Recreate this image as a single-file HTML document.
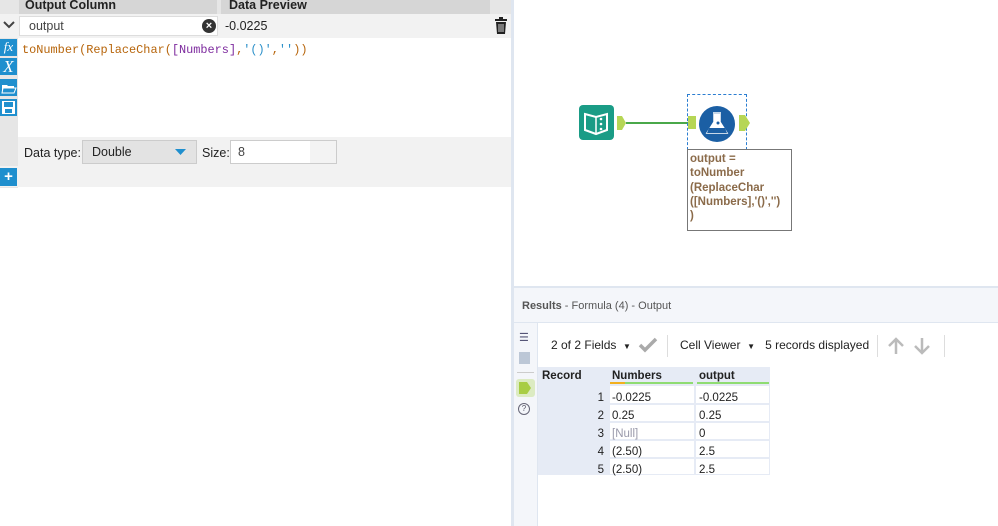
<!DOCTYPE html>
<html><head><style>
*{margin:0;padding:0;box-sizing:border-box}
body{width:998px;height:526px;overflow:hidden;background:#fff;font-family:"Liberation Sans",sans-serif;font-size:12px;color:#222;position:relative}
.a{position:absolute}
.mono{font-family:"Liberation Mono",monospace}
</style></head><body>
<div class="a" style="left:0;top:0;width:511px;height:14px;background:#e6e6e6"></div>
<div class="a" style="left:19px;top:0;width:198px;height:14px;background:#d6d6d6;font-weight:bold;font-size:12.5px;padding-left:6px;line-height:10px;color:#222">Output Column</div>
<div class="a" style="left:221px;top:0;width:269px;height:14px;background:#d6d6d6;font-weight:bold;font-size:12.5px;padding-left:8px;line-height:10px;color:#222">Data Preview</div>
<div class="a" style="left:0;top:14px;width:511px;height:24px;background:#f2f2f2"></div>
<svg class="a" style="left:2px;top:20px" width="14" height="10"><path d="M2 2l5 5 5-5" stroke="#444" stroke-width="2" fill="none"/></svg>
<div class="a" style="left:19px;top:16px;width:199px;height:20px;background:#fff;border:1px solid #ddd;padding-left:9px;line-height:18px;font-size:12.5px;color:#444">output</div>
<div class="a" style="left:202px;top:19px;width:14px;height:14px;border-radius:7px;background:#333;color:#fff;font-size:11px;line-height:14px;text-align:center;font-weight:bold">×</div>
<div class="a" style="left:225px;top:19px;font-size:12.5px;color:#222">-0.0225</div>
<svg class="a" style="left:494px;top:17px" width="14" height="18"><rect x="1" y="2" width="12" height="2" fill="#222"/><rect x="5" y="0" width="4" height="2" fill="#222"/><path d="M2 5h10l-1 12H3z" fill="#222"/><path d="M5 7v8M7 7v8M9 7v8" stroke="#fff" stroke-width="0.8"/></svg>
<div class="a" style="left:0;top:38px;width:18px;height:150px;background:#e6e6e6"></div>
<div class="a" style="left:0;top:39px;width:17px;height:17px;background:#1f8fce;color:#fff;font-family:'Liberation Serif',serif;font-style:italic;font-size:13px;text-align:center;line-height:15px">fx</div>
<div class="a" style="left:0;top:58px;width:17px;height:17px;background:#1f8fce;color:#fff;font-family:'Liberation Serif',serif;font-style:italic;font-size:17px;text-align:center;line-height:17px">X</div>
<div class="a" style="left:0;top:79px;width:17px;height:17px;background:#1f8fce"><svg width="17" height="17"><path d="M2 6h5l1 1h6v7H2z" fill="#fff"/><path d="M3 9h13l-2 5H2z" fill="#1f8fce" stroke="#fff"/></svg></div>
<div class="a" style="left:0;top:99px;width:17px;height:17px;background:#1f8fce"><svg width="17" height="17"><rect x="2" y="2" width="13" height="13" fill="#fff"/><rect x="4" y="3" width="9" height="5" fill="#1f8fce"/><rect x="5" y="10" width="7" height="4" fill="#1f8fce"/></svg></div>
<div class="a mono" style="left:22px;top:43px;font-size:11.9px;color:#b7650b;white-space:pre">toNumber(ReplaceChar(<span style="color:#7d2a9e">[Numbers]</span>,<span style="color:#2a8fc9">'()'</span>,<span style="color:#2a8fc9">''</span>))</div>
<div class="a" style="left:18px;top:137px;width:493px;height:29px;background:#f2f2f2"></div>
<div class="a" style="left:24px;top:146px;font-size:12.5px">Data type:</div>
<div class="a" style="left:82px;top:140px;width:115px;height:24px;background:#e3e3e3;border:1px solid #ccc;padding-left:9px;line-height:22px;font-size:12.5px">Double</div>
<svg class="a" style="left:175px;top:149px" width="12" height="7"><path d="M0 0h11l-5.5 6z" fill="#1f8fce"/></svg>
<div class="a" style="left:202px;top:146px;font-size:12.5px">Size:</div>
<div class="a" style="left:230px;top:140px;width:107px;height:24px;background:#fff;border:1px solid #ccc;padding-left:7px;line-height:22px;font-size:12.5px;color:#444">8</div>
<div class="a" style="left:310px;top:141px;width:26px;height:22px;background:#f3f3f3"></div>
<div class="a" style="left:0;top:166px;width:511px;height:21px;background:#f2f2f2"></div>
<div class="a" style="left:0;top:168px;width:17px;height:18px;background:#1f8fce;color:#fff;font-weight:bold;font-size:15px;text-align:center;line-height:18px">+</div>
<div class="a" style="left:511px;top:0;width:3px;height:526px;background:#dfe6f0"></div>
<div class="a" style="left:514px;top:286px;width:484px;height:2px;background:#dfe6f0"></div>
<div class="a" style="left:579px;top:105px;width:35px;height:35px;border-radius:4px;background:#1a9c86"><svg width="35" height="35"><path d="M6 9l11 3 11-3v16l-11 4-11-4z" fill="none" stroke="#fff" stroke-width="2"/><path d="M17 12v17" stroke="#fff" stroke-width="1.5"/><circle cx="22" cy="14" r="1.3" fill="#fff"/><circle cx="22" cy="19" r="1.3" fill="#fff"/><circle cx="22" cy="24" r="1.3" fill="#fff"/></svg></div>
<svg class="a" style="left:617px;top:116px" width="10" height="14"><path d="M0 0h5l4 7-4 7H0z" fill="#b6d655"/></svg>
<div class="a" style="left:626px;top:122px;width:63px;height:2px;background:#4aa84a"></div>
<div class="a" style="left:687px;top:94px;width:60px;height:56px;border:1px dashed #2a7dd1"></div>
<div class="a" style="left:688px;top:116px;width:8px;height:13px;background:#b6d655"></div>
<svg class="a" style="left:697px;top:104px" width="40" height="40"><circle cx="20" cy="20" r="18" fill="#1b5fa4"/><path d="M16 9h8M17 10v8l-7 11h20l-7-11v-8" fill="#fff" stroke="#fff" stroke-width="1.5"/><path d="M12 24h16l2 5H10z" fill="#1b5fa4"/><circle cx="21" cy="19" r="1.5" fill="#1b5fa4"/></svg>
<svg class="a" style="left:739px;top:115px" width="12" height="16"><path d="M0 0h6l5 8-5 8H0z" fill="#b6d655"/></svg>
<div class="a" style="left:687px;top:149px;width:105px;height:82px;border:1px solid #777;background:#fff;padding:2px 0 0 2px;font-size:11.5px;font-weight:bold;color:#8b6b4a;line-height:14.3px">output =<br>toNumber<br>(ReplaceChar<br>([Numbers],'()','')<br>)</div>
<div class="a" style="left:514px;top:288px;width:484px;height:35px;background:#f4f6fa;border-bottom:1px solid #dfe6f0"></div>
<div class="a" style="left:522px;top:300px;font-size:11px;color:#555"><b>Results</b> - Formula (4) - Output</div>
<div class="a" style="left:514px;top:323px;width:24px;height:203px;background:#f4f6fa;border-right:1px solid #dfe6f0"></div>
<div class="a" style="left:519px;top:331px;font-size:11px;color:#557">☰</div>
<div class="a" style="left:519px;top:352px;width:11px;height:12px;background:#bcc7d6"></div>
<div class="a" style="left:517px;top:372px;width:17px;height:1px;background:#ccc"></div>
<div class="a" style="left:516px;top:379px;width:19px;height:18px;background:#dcebc2;border-radius:3px"></div>
<svg class="a" style="left:519px;top:382px" width="13" height="12"><path d="M0 0h8l4 6-4 6H0z" fill="#a8cd44"/></svg>
<div class="a" style="left:518px;top:403px;width:12px;height:12px;border:1px solid #667;border-radius:6px;font-size:8px;line-height:10px;text-align:center;color:#556">?</div>
<div class="a" style="left:551px;top:338px;font-size:12px">2 of 2 Fields &nbsp;<span style="font-size:8px">▼</span></div>
<svg class="a" style="left:638px;top:337px" width="20" height="16"><path d="M2 8l5 5 11-11" stroke="#aaa" stroke-width="3.5" fill="none"/></svg>
<div class="a" style="left:667px;top:335px;width:1px;height:22px;background:#ddd"></div>
<div class="a" style="left:680px;top:338px;font-size:12px">Cell Viewer &nbsp;<span style="font-size:8px">▼</span> &nbsp;&nbsp;5 records displayed</div>
<div class="a" style="left:877px;top:335px;width:1px;height:22px;background:#ddd"></div>
<svg class="a" style="left:886px;top:336px" width="46" height="20"><path d="M10 18V3M3 10l7-7 7 7M36 2v15M29 10l7 7 7-7" stroke="#bbb" stroke-width="2.5" fill="none"/></svg>
<div class="a" style="left:944px;top:335px;width:1px;height:22px;background:#ddd"></div>
<div class="a" style="left:538px;top:367px;width:232px;height:108px;background:#e6ebf5"></div>
<div class="a" style="left:542px;top:370px;font-weight:bold;font-size:11.5px">Record</div>
<div class="a" style="left:612px;top:370px;font-weight:bold;font-size:11.5px">Numbers</div>
<div class="a" style="left:699px;top:370px;font-weight:bold;font-size:11.5px">output</div>
<div class="a" style="left:610px;top:382px;width:15px;height:2px;background:#f2b01e"></div>
<div class="a" style="left:625px;top:382px;width:68px;height:2px;background:#8fdc72"></div>
<div class="a" style="left:697px;top:382px;width:72px;height:2px;background:#8fdc72"></div>
<div class="a" style="left:609px;top:386px;width:160px;height:88px;background:#fff"></div>
<div class="a" style="left:608px;top:367px;width:2px;height:108px;background:#e6ebf5"></div>
<div class="a" style="left:694px;top:367px;width:2px;height:108px;background:#e6ebf5"></div>
<div class="a" style="left:538px;top:403px;width:232px;height:2px;background:#e6ebf5"></div>
<div class="a" style="left:538px;top:421px;width:232px;height:2px;background:#e6ebf5"></div>
<div class="a" style="left:538px;top:439px;width:232px;height:2px;background:#e6ebf5"></div>
<div class="a" style="left:538px;top:457px;width:232px;height:2px;background:#e6ebf5"></div>
<div class="a" style="left:538px;top:389px;width:232px;font-size:11.5px;line-height:18px">
<div style="position:relative;height:18px"><span class="a" style="right:166px">1</span><span class="a" style="left:74px">-0.0225</span><span class="a" style="left:161px">-0.0225</span></div>
<div style="position:relative;height:18px"><span class="a" style="right:166px">2</span><span class="a" style="left:74px">0.25</span><span class="a" style="left:161px">0.25</span></div>
<div style="position:relative;height:18px"><span class="a" style="right:166px">3</span><span class="a" style="left:74px;color:#99a">[Null]</span><span class="a" style="left:161px">0</span></div>
<div style="position:relative;height:18px"><span class="a" style="right:166px">4</span><span class="a" style="left:74px">(2.50)</span><span class="a" style="left:161px">2.5</span></div>
<div style="position:relative;height:18px"><span class="a" style="right:166px">5</span><span class="a" style="left:74px">(2.50)</span><span class="a" style="left:161px">2.5</span></div>
</div>
</body></html>
